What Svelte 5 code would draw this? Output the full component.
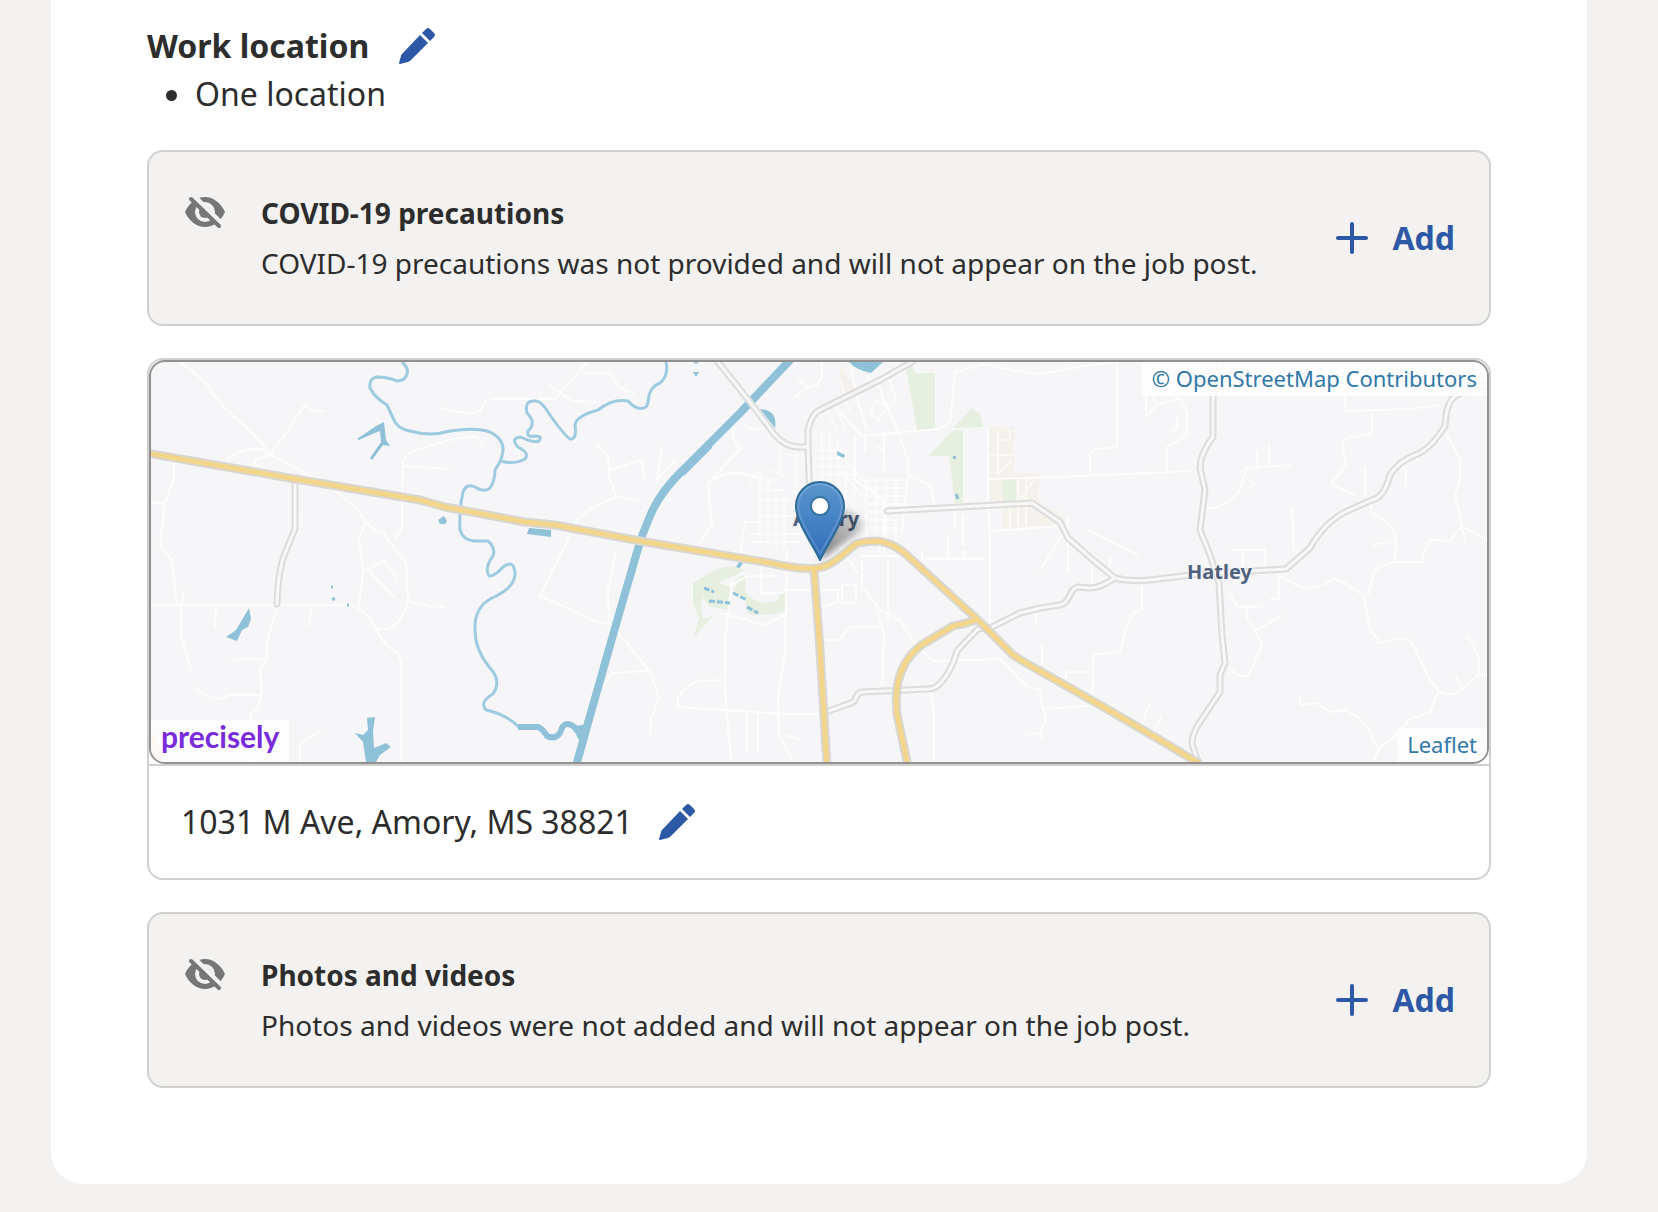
<script lang="ts">
	const address = '1031 M Ave, Amory, MS 38821';
	const workLocations = ['One location'];

	const covid = {
		id: 'covid',
		title: 'COVID-19 precautions',
		text: 'COVID-19 precautions was not provided and will not appear on the job post.'
	};

	const media = {
		id: 'media',
		title: 'Photos and videos',
		text: 'Photos and videos were not added and will not appear on the job post.'
	};

	const streets = [
		'M180 362 Q208 382 212 392 Q220 405 236 418 Q258 436 270 454 L294 467 L330 488 Q354 502 366 522 L375 531 L383 532 L394 548 L406 563 L408 600 Q402 624 388 629 L376 629',
		'M270 454 L288 431 Q296 415 305 405 L312 411 L324 411',
		'M226 460 Q238 448 262 449 L268 456 L255 459 L254 464 L262 466',
		'M174 462 V477 L165 503 L160 545 L172 560 L177 603',
		'M151 503 H165',
		'M151 605 H350 Q368 611 376 629 Q384 646 398 653 L401 662 V762',
		'M402 492 L403 460 Q409 451 424 448 Q455 436 478 437 L483 446',
		'M403 466 L450 469',
		'M366 522 L359 537 L363 570 L359 607',
		'M402 490 V528 L394 540',
		'M363 572 L384 561 L397 578 M370 572 L394 597',
		'M408 601 L430 606 L445 607',
		'M184 591 L181 605 V636 L191 670 M216 606 L215 628 M312 606 L309 627',
		'M277 610 Q264 642 267 660 L260 668 L262 694 L258 708 L250 714 V762',
		'M267 659 H240 L230 661 M195 688 L208 697 L219 699 L230 695 H261',
		'M300 762 V744 L322 730',
		'M490 399 H555 L587 362 M549 385 L560 393 L573 401 L600 402 M583 373 H610 L620 388 L634 394',
		'M440 408 Q472 416 480 411 L486 400',
		'M596 444 L608 457 L610 480 L616 496 L638 501 M610 470 L642 460 L644 480',
		'M662 446 L657 480 L676 460',
		'M616 497 Q580 512 576 522 L540 596 L595 621 L612 625 L650 672 L659 697 L651 720 L650 735',
		'M616 550 L608 590 L609 624 M603 687 L612 673 L648 671',
		'M734 425 L732 436 L740 449 L708 484 L712 525 L698 545',
		'M708 482 Q732 468 748 475 L760 478 M745 425 L752 430 L770 427',
		'M731 762 L725 690 L725 640 L732 580 M732 585 L747 576 H775',
		'M787 550 L785 650 L778 700 L779 735 L793 762',
		'M678 708 L678 697 Q694 678 704 681 L724 680 M678 707 L785 714 H818',
		'M747 713 V750 M758 713 V752 M720 613 L740 618 L763 625 L785 615 M784 735 L800 739',
		'M840 412 L862 436 L903 432 L940 429 L950 422 L955 372 L985 364 Q1018 372 1040 374 L1085 366 L1117 362 V447 L1095 449 L1090 454 V476',
		'M988 428 V502 L990 540 V629 M988 479 L1060 477 L1190 471',
		'M898 431 L908 460 L909 476 L930 485 L935 506 M908 476 L902 530',
		'M955 505 V530 M990 531 L1065 526 M963 515 V546 M880 555 V540 M948 535 V558',
		'M925 559 H985 M922 550 V560 M948 560 V550 M964 560 V550',
		'M1068 516 V573 M1065 531 L1040 570 M1088 530 L1140 556',
		'M1142 373 L1157 405 L1146 417 V380 M1157 405 L1180 398 L1187 412 V435 L1167 447 V474',
		'M1169 433 L1177 428 V415',
		'M1215 393 L1345 388 V411 L1410 409 L1440 405',
		'M1372 411 V433 L1345 439 L1342 445 L1346 465 L1331 484 L1355 495',
		'M1205 509 Q1228 507 1240 490 L1246 468 L1292 465 M1257 450 V468 M1269 444 V468 M1246 478 L1254 483 L1251 490',
		'M1446 433 L1460 460 V480 L1455 495 L1462 526 L1450 541 L1430 540 L1423 555 V562 H1395 Q1376 565 1373 575 L1368 595',
		'M1462 526 L1487 540 M1462 526 L1465 541 M1371 500 V513 Q1396 524 1396 541 L1395 562 M1396 541 L1372 545',
		'M1292 507 L1294 550 L1300 555 M1365 467 V495 M1400 464 L1406 470 V486',
		'M1278 575 L1300 587 Q1318 590 1334 579 L1345 583 L1364 596 L1370 629 L1380 643 L1400 638 Q1410 638 1416 650 L1430 680 L1440 692 Q1454 698 1462 689 L1478 675 H1487',
		'M1462 689 L1456 677 M1478 677 Q1483 655 1467 635 M1438 692 L1430 712 L1410 719 L1393 738 L1380 747 L1373 762',
		'M1300 696 V705 L1317 703 L1330 712 L1345 710 Q1370 722 1373 740 L1380 750',
		'M1228 590 L1237 607 L1250 607 L1262 606 M1247 608 V618 L1255 630 L1262 646 L1255 660 L1248 676 Q1238 678 1229 667',
		'M1257 630 L1281 616 M1270 599 H1279 V575 M1230 550 H1265 V572 M1243 550 V571',
		'M1142 585 V609 Q1132 610 1126 628 L1120 652 L1093 655 V685 L1091 695 M1066 672 H1091 M1066 672 V681',
		'M1042 645 V665 M1036 613 V625 M1092 567 V585 M1110 556 V567',
		'M862 560 V587 L880 610 L900 620 L917 647 L933 661 L1000 659 L1027 687 L1040 690 L1042 706 L1046 720 L1040 733 L1025 735',
		'M1043 709 L1088 706 L1117 705 M1040 733 L1042 740 M1150 703 L1142 724 M1162 716 L1154 731',
		'M888 560 V621 M840 639 L850 627 H880 M877 610 L884 635 L882 685 M931 692 L934 710 V762',
		'M840 547 L858 573 M861 556 H900 M842 585 H856 V603 H842 V585',
		'M761 566 V593 H783 M783 590 H838 V602 L822 607 M825 640 H840',
		'M884 432 V470 M865 436 V452 M875 445 L883 450 M855 436 V480 L884 500 V555',
		'M795 397 L808 387 L820 384 M797 380 L812 388 M822 362 V378 L812 388',
		'M850 362 L858 402 L867 430 M866 375 L880 388 L884 400 L898 432 M890 380 L896 400 L888 410 L880 395',
		'M870 412 L876 401 L888 405 L878 420 L870 412'
	];

	const town = [
		'M815 450 H842 M815 458 H845 M815 466 H850 M818 474 H855 M865 480 H908 M865 488 H908 M865 496 H908 M868 504 H905 M868 512 H905 M868 520 H900 M870 528 H898',
		'M822 430 V480 M830 428 V484 M838 436 V490 M846 450 V500 M854 460 V520 M866 480 V535 M876 480 V535 M886 480 V535 M896 480 V545',
		'M760 470 V540 M768 478 V545 M776 490 V548 M784 500 V548 M748 534 H800 M748 542 H800 M758 500 H790 M758 490 H784 M758 480 H776 M758 516 H794 M740 555 L745 522 H760 M748 485 L760 470',
		'M840 470 L870 505 M846 462 L880 500 M836 480 L862 520 M840 380 L850 412 M826 410 L838 430 M834 405 L846 428',
		'M780 452 V475 M788 455 H804 M796 450 V500 M772 470 L785 476',
		'M998 430 V475 M1010 430 V440 L998 440 M990 455 H1014 M998 475 L1012 460 M1018 480 V526 M1026 478 V526 M1034 480 L1020 500 M1010 505 V528'
	];

	const greyRoads = [
		'M295 482 V529 L285 553 Q278 570 277 604',
		'M718 362 L750 402 L775 435 Q785 447 800 447 H808',
		'M810 500 L808 447 V430 Q812 413 820 410 L842 399 L880 380 L912 362',
		'M887 511 L960 507 L1032 503 L1060 522 L1068 538 L1093 560 L1115 578 Q1130 582 1150 580 L1200 574 L1286 569 L1310 548 Q1324 523 1345 512 L1372 500 Q1384 498 1390 475 Q1398 462 1415 455 Q1430 450 1445 426 Q1446 404 1454 397 L1475 386 H1487',
		'M1221 362 Q1213 385 1213 400 V437 Q1200 454 1200 468 L1205 490 L1200 530 L1210 555 L1219 583 L1222 635 L1225 663 L1220 675 V692 L1198 725 Q1192 735 1192 744 L1198 762',
		'M1115 578 Q1100 588 1090 588 L1078 587 Q1073 588 1070 595 Q1066 604 1060 605 L1040 608 L1020 613 L992 627 L978 629 Q966 641 957 651 Q950 676 936 687 Q932 689 928 689 L862 692 Q857 693 855 700 Q853 703 848 704 L826 712'
	];

	const highways = [
		'M147 453 L295 479 L420 500 L445 507 L525 522 L555 525 L640 541 L770 563 Q800 570 818 568 Q828 567 840 557 L856 544 Q865 541 878 541 Q895 543 910 558 L978 620 L1012 654 Q1018 659 1040 671 L1100 705 L1160 740 L1200 764',
		'M814 569 L820 650 L827 766',
		'M978 619 Q966 624 953 626 Q946 630 920 646 Q903 660 898 682 Q894 705 899 724 L908 766'
	];

	const rivers = [
		'M402 362 Q409 368 407 374 Q405 381 397 381 Q388 377 376 377 Q369 379 370 388 Q375 398 387 405 L393 418 Q397 429 410 431 Q430 437 450 431 Q476 427 490 432 Q504 439 503 451 Q502 460 495 470 Q495 481 490 488 Q484 493 475 487 Q466 483 463 492 Q459 509 460 530 Q463 540 474 541 L488 541 Q496 548 493 556 Q484 568 489 576 Q494 577 503 567 Q514 559 515 573 Q516 587 492 598 Q474 607 475 630 Q475 650 490 668 Q502 681 493 694 Q479 702 486 710 Q506 714 520 728',
		'M501 461 Q514 465 525 459 Q530 453 518 447 Q510 438 521 437 Q532 443 539 441 Q543 436 535 436 Q526 438 528 431 Q537 423 527 413 Q524 400 535 401 Q541 400 550 415 Q564 435 570 439 Q577 440 575 425 Q576 416 598 410 Q613 398 628 401 Q638 412 646 407 Q648 405 649 395 Q652 386 660 383 Q669 375 666 362'
	];

	const lakes = [
		'M357 439 L376 426 L384 422 L386 440 L390 446 L383 445 L372 460 L370 458 L381 442 L380 431 L370 435 L359 440 Z',
		'M438 520 L444 516 L447 521 L445 524 L440 524 Z',
		'M529 528 L551 530 V537 L527 534 Z',
		'M249 608 L251 619 L248 627 L242 630 L237 641 L226 637 L236 630 L242 620 Z',
		'M367 718 L375 717 L373 732 L374 748 L386 743 L391 747 L380 755 L376 762 L366 762 L363 742 L355 733 L363 735 L368 730 Z',
		'M849 362 H883 L871 373 Q856 370 849 362 Z',
		'M760 409 Q778 410 775 428 Z',
		'M837 451 L845 455 L844 458 L837 455 Z',
		'M736 567 L739 562 L744 561 L740 568 Z',
		'M693 362 H699 L696 364 Z M693 372 H699 L696 377 Z',
		'M748 404 L746 412 L737 420 L730 420 Z',
		'M712 440 L712 448 L684 476 L678 472 Z',
		'M576 726 L588 724 L588 736 L582 752 Z'
	];

	const parks = [
		'M905 362 H911 L915 373 H935 V430 H917 Z',
		'M953 428 L972 408 L980 414 L983 427 Z',
		'M928 456 L953 430 H963 V503 H955 L949 456 Z',
		'M1002 479 H1016 V501 H1003 Z',
		'M693 583 L718 568 L735 566 L745 570 L738 574 L718 583 L731 587 L730 610 L710 607 L703 597 L701 608 L703 619 L713 616 L693 638 L699 618 L693 603 Z',
		'M738 577 L745 575 L746 594 Q760 607 779 600 V594 H785 V611 Q762 618 747 613 L745 597 L734 594 Z'
	];

	const suburbs = [
		'M989 427 H1014 V473 H1039 V500 L1063 516 L1065 524 L1002 529 V505 L990 502 Z',
		'M840 365 L855 388 L850 402 L840 392 Z'
	];
</script>

{#snippet pencil()}
	<svg class="pencil" viewBox="0 0 48 48" aria-hidden="true">
		<path d="M27 13 L35 21 L18 38 Q17 39 15 40 L7 42 Q6 42 6 41 L8 34 Q8 33 9 32 Z" />
		<path d="M29 11 L33 7 Q35 5 37 7 L41 11 Q43 13 41 15 L37 19 Z" />
	</svg>
{/snippet}

{#snippet emptyCard(item: { id: string; title: string; text: string })}
	<section class="card empty-card">
		<svg class="eye-off" viewBox="0 0 48 42" aria-hidden="true">
			<mask id="gap-{item.id}">
				<rect width="48" height="42" fill="#fff" />
				<path d="M8 4 L42 38" stroke="#000" stroke-width="5" transform="translate(3 -2)" />
				<path d="M0 -3 L15 12 L11 0 Z" fill="#000" />
			</mask>
			<g mask="url(#gap-{item.id})">
				<path
					fill-rule="evenodd"
					d="M4 20 C8 11 16 5 24 5 S40 11 44 20 C40 29 32 35 24 35 S8 29 4 20 Z M24 10 A10 10 0 1 0 24 30 A10 10 0 1 0 24 10 Z"
				/>
				<circle cx="24" cy="20" r="6" />
			</g>
			<path class="slash" d="M10 7 L38 34" />
		</svg>
		<div class="empty-text">
			<h3>{item.title}</h3>
			<p>{item.text}</p>
		</div>
		<button class="add" type="button" aria-label="Add {item.title}">
			<svg class="plus" viewBox="0 0 32 32" aria-hidden="true">
				<path d="M16 2 V30 M2 16 H30" />
			</svg>
			Add
		</button>
	</section>
{/snippet}

<main class="sheet">
	<header class="row">
		<h2>Work location</h2>
		<button class="icon-button" type="button" aria-label="Edit work location">
			{@render pencil()}
		</button>
	</header>
	<ul>
		{#each workLocations as location}
			<li>{location}</li>
		{/each}
	</ul>

	<div class="cards">
		{@render emptyCard(covid)}

		<section class="card map-card">
			<div class="map">
				<svg class="tiles" viewBox="151 362 1336 400" preserveAspectRatio="xMidYMid slice" role="img" aria-label="Map of Amory">
					<defs>
						<linearGradient id="pin" x1="0" y1="0" x2="0" y2="1">
							<stop offset="0" stop-color="#5a97cd" />
							<stop offset="1" stop-color="#2f6cb9" />
						</linearGradient>
						<linearGradient id="shade" x1="0" y1="1" x2="1" y2="0">
							<stop offset="0" stop-color="#000" stop-opacity="0.5" />
							<stop offset="1" stop-color="#000" stop-opacity="0.12" />
						</linearGradient>
						<filter id="soft" x="-30%" y="-30%" width="160%" height="160%">
							<feGaussianBlur stdDeviation="3" />
						</filter>
					</defs>

					{#each suburbs as d}<path class="suburb" {d} />{/each}
					{#each parks as d}<path class="park" {d} />{/each}
					<path class="orchard" d="M151 729 Q160 743 165 762 H151 Z" />
					{#each streets as d}<path class="street" {d} />{/each}
					{#each town as d}<path class="street town" {d} />{/each}

					{#each rivers as d}<path class="river" {d} />{/each}
					<path class="canal" d="M792 358 L740 413 L683 470 Q660 492 650 516 Q642 534 637 552 L615 628 L586 730 L576 766" />
					<path class="river wide" d="M518 727 H538 Q543 729 547 736 Q555 740 560 733 Q563 723 568 724 Q576 725 581 738" />
					{#each lakes as d}<path class="lake" {d} />{/each}
					<path class="ponds" d="M704 588 L714 592 M709 601 L730 603 M733 593 L747 600 M747 607 L758 613 M953 458 L956 457 M956 494 L958 499 M331 587 H333 M332 599 H335 M347 605 H349" />

					{#each greyRoads as d}<path class="road-case" {d} />{/each}
					{#each greyRoads as d}<path class="road" {d} />{/each}
					{#each highways as d}<path class="highway-case" {d} />{/each}
					{#each highways as d}<path class="highway" {d} />{/each}

					<text class="place" x="793" y="526">Amory</text>
					<text class="place" x="1187" y="579">Hatley</text>

					<path class="shadow" d="M820 560 L828 522 Q836 506 852 512 Q868 520 860 532 Z" />
					<path class="pin" d="M820 560 C814 546 796 523 796 506 A24 24 0 0 1 844 506 C844 523 826 546 820 560 Z" />
					<path class="pin-glow" d="M820 554 C814 541 798 520 798 506 A22 22 0 0 1 842 506 C842 520 826 541 820 554 Z" />
					<circle class="pin-hole" cx="820" cy="506" r="9" />
				</svg>
				<a class="credit top" href="#osm">© OpenStreetMap Contributors</a>
				<a class="logo" href="#precisely">precisely</a>
				<a class="credit bottom" href="#leaflet">Leaflet</a>
			</div>
			<div class="row address">
				<span>{address}</span>
				<button class="icon-button" type="button" aria-label="Edit address">
					{@render pencil()}
				</button>
			</div>
		</section>

		{@render emptyCard(media)}
	</div>
</main>

<style>
	:global(body) {
		margin: 0;
		background: #f3f2f0;
	}

	.sheet {
		margin: 0 71px 28px 51px;
		padding: 22px 96px 96px;
		border-radius: 0 0 32px 32px;
		background: #fff;
		color: #2d2d2d;
		font-family: 'Noto Sans', 'Open Sans', sans-serif;
		font-size: 32px;
		line-height: 48px;
	}

	h2, h3, p, ul {
		margin: 0;
	}

	h2 {
		font-size: 32px;
		font-weight: 700;
	}

	ul {
		padding-left: 48px;
	}

	button {
		padding: 0;
		border: 0;
		background: none;
		color: #2d58a5;
		font: inherit;
		cursor: pointer;
	}

	.row {
		display: flex;
		align-items: center;
		gap: 24px;
	}

	.icon-button {
		display: flex;
	}

	.pencil {
		width: 48px;
		height: 48px;
		fill: currentColor;
	}

	.cards {
		display: flex;
		flex-direction: column;
		gap: 32px;
		margin-top: 32px;
	}

	.card {
		border: 2px solid #d1d0ce;
		border-radius: 16px;
	}

	.empty-card {
		display: flex;
		align-items: flex-start;
		gap: 32px;
		padding: 40px 34px 40px 32px;
		background: #f3f2f0;
	}

	.eye-off {
		flex: none;
		width: 48px;
		height: 42px;
		fill: #767676;
	}

	.slash {
		stroke: #767676;
		stroke-width: 4;
		stroke-linecap: round;
	}

	.empty-text {
		flex: 1;
		font-size: 28px;
		line-height: 42px;
	}

	h3 {
		margin-bottom: 8px;
		font-size: 28px;
		font-weight: 700;
	}

	.add {
		display: flex;
		align-items: center;
		align-self: center;
		gap: 24px;
		font-weight: 700;
	}

	.plus {
		width: 32px;
		height: 32px;
		fill: none;
		stroke: currentColor;
		stroke-width: 4;
		stroke-linecap: round;
	}

	.map {
		position: relative;
		overflow: hidden;
		border: 2px solid #919191;
		border-radius: 16px;
		background: #f6f6f8;
	}

	.tiles {
		display: block;
		width: 100%;
		height: 400px;
	}

	.tiles path {
		fill: none;
		stroke-linejoin: round;
	}

	.tiles .suburb { fill: #f5f1ec; }
	.tiles .park { fill: #e7efe0; }
	.tiles .orchard { fill: #fae0cd; }
	.tiles .lake { fill: #8fc1d9; }

	.street {
		stroke: #fdfdfd;
		stroke-width: 2;
	}

	.town {
		opacity: 0.8;
	}

	.river {
		stroke: #9fcbe0;
		stroke-width: 3;
	}

	.river.wide {
		stroke: #8fc1d9;
		stroke-width: 6;
	}

	.canal {
		stroke: #8fc1d9;
		stroke-width: 8;
	}

	.ponds {
		stroke: #8fc1d9;
		stroke-width: 3;
		stroke-dasharray: 6 2;
	}

	.road-case {
		stroke: #dcdcdc;
		stroke-width: 7;
		stroke-linecap: round;
	}

	.road {
		stroke: #f7f7f7;
		stroke-width: 3;
		stroke-linecap: round;
	}

	.highway-case {
		stroke: #d8d7d2;
		stroke-width: 9;
	}

	.highway {
		stroke: #f3d58b;
		stroke-width: 5;
	}

	.place {
		fill: #4f617c;
		stroke: #f6f6f8;
		stroke-width: 2;
		paint-order: stroke;
		font-size: 20px;
		font-weight: 700;
	}

	.tiles .shadow {
		fill: url(#shade);
		filter: url(#soft);
	}

	.tiles .pin {
		fill: url(#pin);
		stroke: #2e6c97;
		stroke-width: 2;
	}

	.pin-glow {
		stroke: #fff;
		stroke-opacity: 0.15;
		stroke-width: 2;
	}

	.pin-hole {
		fill: #fff;
		stroke: #35709f;
		stroke-width: 2;
	}

	.map a {
		position: absolute;
		background: rgba(255, 255, 255, 0.8);
		text-decoration: none;
	}

	.credit {
		right: 0;
		padding: 0 10px 2px;
		color: #3078a8;
		font-size: 22px;
		line-height: 32px;
	}

	.top { top: 0; }
	.bottom { bottom: 0; }

	.logo {
		bottom: 0;
		left: 0;
		padding: 0 10px 10px;
		color: #7a2bdc;
		font-family: Lato, sans-serif;
		font-size: 30px;
		font-weight: 700;
		line-height: 32px;
	}

	.address {
		gap: 20px;
		padding: 32px;
		border-top: 2px solid #d1d0ce;
	}
</style>
